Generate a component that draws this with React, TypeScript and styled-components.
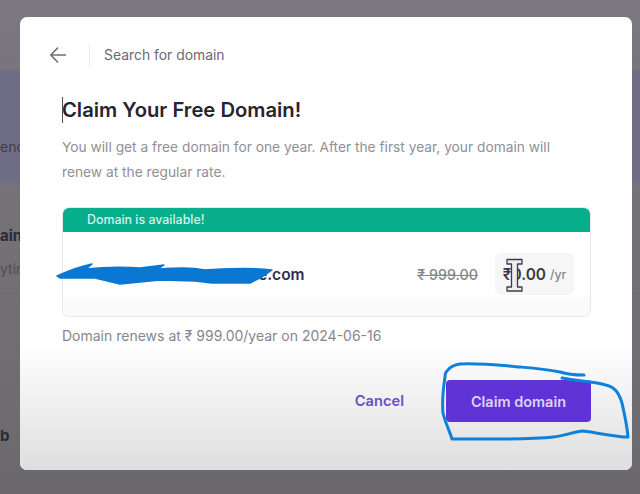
import React from "react";
import styled, { createGlobalStyle } from "styled-components";

const GlobalStyle = createGlobalStyle`
  html, body {
    margin: 0;
    padding: 0;
    background: #7a777d;
  }
  * {
    box-sizing: border-box;
  }
`;

const Page = styled.div`
  position: relative;
  width: 640px;
  height: 494px;
  overflow: hidden;
  font-family: "Inter", "Noto Sans", sans-serif;
  background: linear-gradient(#7b777e, #6b696e);
`;

// dimmed page behind the dialog
const Backdrop = styled.div`
  display: flex;
  flex-direction: column;
  height: 100%;
  padding-top: 70px;
`;

const Band = styled.div`
  height: 112px;
  background: #6e6d85;
  display: flex;
  align-items: center;
  padding-top: 40px;
  color: #3d3c4c;
  font-size: 14px;
`;

const BackSection = styled.div<{ $h: number; $line?: boolean }>`
  height: ${(p) => p.$h}px;
  display: flex;
  align-items: center;
  border-bottom: ${(p) => (p.$line ? "1px solid #6c6a70" : "0")};
  color: #4f4d55;
  font-size: 14px;
`;

const BackTitle = styled.span`
  font-weight: 700;
  color: #2b2a33;
  font-size: 15px;
`;

const Dialog = styled.div`
  position: absolute;
  left: 20px;
  top: 17px;
  width: 612px;
  height: 453px;
  border-radius: 7px;
  overflow: hidden;
  display: flex;
  flex-direction: column;
  background: #fff;
`;

const Header = styled.div`
  display: flex;
  align-items: center;
  height: 24px;
  margin: 26px 0 0 30px;
`;

const BackArrow = styled.svg`
  width: 16px;
  height: 16px;
  color: #6d6d75;
`;

const HeaderDivider = styled.div`
  width: 1px;
  height: 24px;
  background: #ececee;
  margin: 0 14px 0 23px;
`;

const HeaderText = styled.div`
  font-size: 13.9px;
  color: #6a6a72;
`;

const Body = styled.div`
  padding: 0 41px 0 42px;
  display: flex;
  flex-direction: column;
`;

const TitleRow = styled.div`
  position: relative;
  margin-top: 29px;
`;

const Title = styled.h1`
  margin: 0;
  font-size: 20.2px;
  line-height: 28px;
  font-weight: 600;
  color: #25252f;
`;

const Caret = styled.span`
  position: absolute;
  left: 0;
  top: 1px;
  width: 1px;
  height: 26px;
  background: #4d4d58;
`;

const Description = styled.p`
  margin: 11px 0 0;
  font-size: 13.75px;
  line-height: 25px;
  color: #909098;
`;

const Card = styled.div`
  margin-top: 22px;
  height: 110px;
  border: 1px solid #e9e9ec;
  border-radius: 7px;
  overflow: hidden;
  display: flex;
  flex-direction: column;
  background: #fafafa;
`;

const CardBanner = styled.div`
  height: 25px;
  flex: none;
  margin: -1px -1px 0;
  padding-left: 25px;
  display: flex;
  align-items: center;
  background: #06ae8b;
  color: #d4f3ea;
  font-size: 12.4px;
  font-weight: 500;
`;

const DomainRow = styled.div`
  height: 65px;
  flex: none;
  padding: 19px 16px 0 0;
  display: flex;
  align-items: center;
  background: #fff;
`;

const DomainName = styled.div`
  flex: 1;
  padding-left: 195px;
  font-size: 15.5px;
  font-weight: 600;
  color: #2f2c52;
`;

const OldPrice = styled.div`
  font-size: 14.3px;
  font-weight: 500;
  color: #85858c;
  text-decoration: line-through;
  margin-right: 17px;
`;

const PriceBox = styled.div`
  width: 79px;
  height: 42px;
  border-radius: 6px;
  background: #f6f6f7;
  display: flex;
  align-items: center;
  justify-content: center;
  gap: 4px;
  font-size: 15.4px;
  font-weight: 600;
  color: #3a3a44;
`;

const PerYear = styled.span`
  font-size: 12.5px;
  font-weight: 400;
  color: #74747c;
`;

const RenewNote = styled.div`
  margin-top: 9px;
  font-size: 14px;
  line-height: 20px;
  color: #86868e;
`;

const Footer = styled.div`
  flex: 1;
  display: flex;
  align-items: flex-start;
  justify-content: flex-end;
  gap: 42px;
  padding: 31px 41px 0 0;
  margin-top: 3px;
  background: linear-gradient(#fdfdfd, #f3f3f3 35%, #dedede);
`;

const CancelButton = styled.button`
  border: 0;
  background: none;
  padding: 0;
  height: 42px;
  font: 600 14.7px "Inter", sans-serif;
  color: #6d4ec6;
`;

const ClaimButton = styled.button`
  width: 145px;
  height: 42px;
  border: 0;
  border-radius: 4px;
  background: #5f33d6;
  color: #dcd2f6;
  font: 600 14.5px "Inter", sans-serif;
`;

const Overlay = styled.svg`
  position: absolute;
  left: 0;
  top: 0;
  width: 640px;
  height: 494px;
  pointer-events: none;
`;

export default function App() {
  return (
    <>
      <GlobalStyle />
      <Page>
        <Backdrop>
          <Band>enc</Band>
          <BackSection $h={33} />
          <BackSection $h={40}>
            <BackTitle>ain</BackTitle>
          </BackSection>
          <BackSection $h={26}>ytin</BackSection>
          <BackSection $h={12} $line />
          <BackSection $h={85} $line />
          <BackSection $h={114}>
            <BackTitle>b</BackTitle>
          </BackSection>
        </Backdrop>

        <Dialog>
          <Header>
            <BackArrow viewBox="0 0 16 16" fill="none" stroke="currentColor" strokeWidth="1.6" strokeLinecap="round" strokeLinejoin="round">
              <path d="M15.5 8H.8M7.6 1 .8 8l6.8 7" />
            </BackArrow>
            <HeaderDivider />
            <HeaderText>Search for domain</HeaderText>
          </Header>
          <Body>
            <TitleRow>
              <Caret />
              <Title>Claim Your Free Domain!</Title>
            </TitleRow>
            <Description>
              You will get a free domain for one year. After the first year, your domain will
              <br />
              renew at the regular rate.
            </Description>
            <Card>
              <CardBanner>Domain is available!</CardBanner>
              <DomainRow>
                <DomainName>e.com</DomainName>
                <OldPrice>₹ 999.00</OldPrice>
                <PriceBox>
                  <span>₹0.00</span>
                  <PerYear>/yr</PerYear>
                </PriceBox>
              </DomainRow>
            </Card>
            <RenewNote>Domain renews at ₹ 999.00/year on 2024-06-16</RenewNote>
          </Body>
          <Footer>
            <CancelButton>Cancel</CancelButton>
            <ClaimButton>Claim domain</ClaimButton>
          </Footer>
        </Dialog>

        <Overlay viewBox="0 0 640 494" fill="none">
          {/* scribble over the domain name */}
          <path
            d="M57 276 C68 271 82 266 92 264 L86 269 C105 267 125 267 140 268 L164 265 L158 269 C175 268 190 267 205 270 C225 269 250 267 272 270 L262 277 L250 283 L212 283 L195 281 L160 280 L120 284 L95 278 L60 278 Z"
            fill="#0a78d2"
            stroke="#0a78d2"
            strokeWidth="1.5"
            strokeLinejoin="round"
          />
          {/* pen circle around the button */}
          <path
            d="M584 375 C575 375 566 374 560 372 C545 369 532 368 520 367 C498 365 478 363 460 364 C454 365 450 367 448 370 C445 372 445 375 445 377 C443 390 442 402 443 413 C445 422 450 432 452 439 C485 439 525 440 553 437 C565 436 575 431 583 431 C600 433 615 437 628 437 C627 425 624 412 622 403 C620 396 617 391 613 388 C608 385 603 384 597 383 C585 381 572 380 562 378"
            stroke="#1180d8"
            strokeWidth="3"
            strokeLinecap="round"
            strokeLinejoin="round"
          />
          {/* text cursor over the price */}
          <path
            d="M507 259.500h15v4.500h-4.500v23h4.500v4h-15v-4h4.500v-23h-4.500z"
            stroke="#3c3c44"
            strokeWidth="1.3"
            fill="#eeeeef"
            strokeLinejoin="round"
          />
        </Overlay>
      </Page>
    </>
  );
}
